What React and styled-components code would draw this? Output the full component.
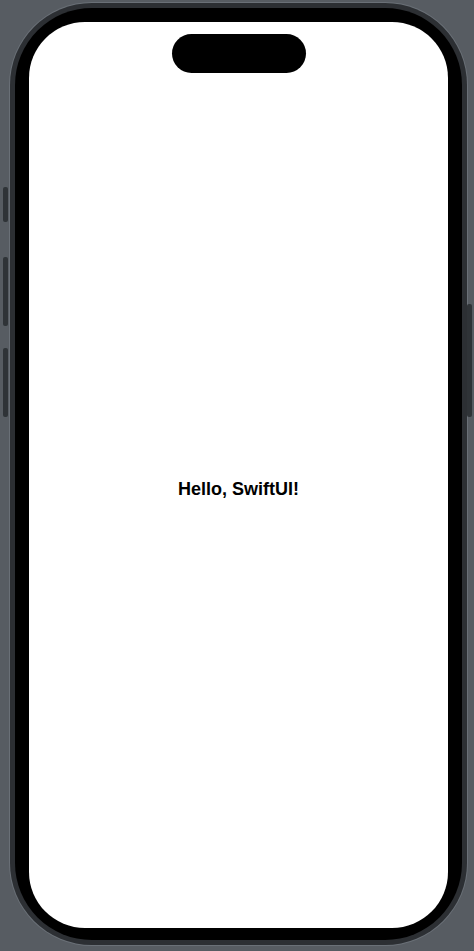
import React from "react";
import styled, { createGlobalStyle } from "styled-components";

const Global = createGlobalStyle`
  html, body { margin: 0; padding: 0; background: #565b61; }
  body { width: 474px; height: 951px; overflow: hidden; font-family: "Liberation Sans", Arial, sans-serif; }
  #root { width: 474px; height: 951px; }
`;

const Device = styled.div`
  position: relative;
  box-sizing: border-box;
  width: 474px;
  height: 951px;
  padding: 3px 7px 6px 10px;
  background: #575c62;
`;

const Rim = styled.div`
  box-sizing: border-box;
  width: 100%;
  height: 100%;
  padding: 5px;
  border-radius: 82px;
  background: #2c2f33;
  box-shadow: 0 0 0 1px #6a7077;
`;

const Bezel = styled.div`
  box-sizing: border-box;
  width: 100%;
  height: 100%;
  padding: 14px 14px 12px 14px;
  border-radius: 77px;
  background: #000;
`;

const Screen = styled.div`
  position: relative;
  box-sizing: border-box;
  width: 100%;
  height: 100%;
  border-radius: 56px;
  background: #fff;
  display: flex;
  align-items: center;
  justify-content: center;
`;

const Island = styled.div`
  position: absolute;
  top: 12px;
  left: 50%;
  transform: translateX(-50%);
  width: 134px;
  height: 39px;
  border-radius: 20px;
  background: #000;
`;

const Greeting = styled.h1`
  margin: 0;
  margin-top: 28px;
  font-family: "Liberation Sans", Arial, sans-serif;
  font-size: 18px;
  font-weight: 700;
  color: #000;
  letter-spacing: 0;
`;

const SideButton = styled.div`
  position: absolute;
  left: ${(p) => p.$left}px;
  top: ${(p) => p.$top}px;
  width: 5px;
  height: ${(p) => p.$h}px;
  border-radius: 2px;
  background: #2f3337;
`;

export default function App() {
  return (
    <>
      <Global />
      <Device>
        <SideButton $left={3} $top={187} $h={35} />
        <SideButton $left={3} $top={257} $h={69} />
        <SideButton $left={3} $top={348} $h={69} />
        <SideButton $left={467} $top={304} $h={113} />
        <Rim>
          <Bezel>
            <Screen>
              <Island />
              <Greeting>Hello, SwiftUI!</Greeting>
            </Screen>
          </Bezel>
        </Rim>
      </Device>
    </>
  );
}
